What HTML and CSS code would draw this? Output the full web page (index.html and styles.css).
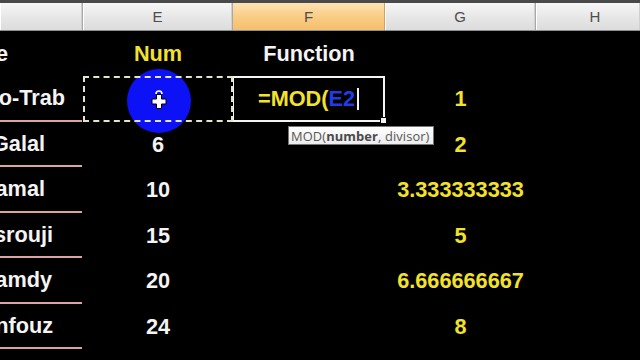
FILE: index.html
```html
<!DOCTYPE html>
<html>
<head>
<meta charset="utf-8">
<link rel="stylesheet" href="styles.css">
</head>
<body>
<div class="app">
  <div class="topbar"></div>
  <div class="colheads">
    <div class="ch ch-d"></div>
    <div class="ch ch-e">E</div>
    <div class="ch ch-f">F</div>
    <div class="ch ch-g">G</div>
    <div class="ch ch-h">H</div>
  </div>
  <div class="sheet">
    <div class="cell name n-head">e</div>
    <div class="cell yellow">Num</div>
    <div class="cell white">Function</div>
    <div class="cell"></div>
    <div class="cell"></div>

    <div class="cell name line n-2">o-Trab</div>
    <div class="cell white selected">
      <span class="val">2</span>
      <span class="spot"></span>
      <svg class="cursor" width="20" height="24" viewBox="0 0 20 24">
        <path d="M7 9 A3 3 0 0 1 13 9" fill="none" stroke="#fff" stroke-width="1.6"/>
        <path d="M7.5 9.5h5v4.5h4.5v5h-4.5v4.5h-5v-4.5h-4.5v-5h4.5z" fill="#fff" stroke="#000" stroke-width="1"/>
      </svg>
      <span class="ants"></span>
    </div>
    <div class="cell editing">
      <span class="yellow">=MOD(</span><span class="ref">E2</span><span class="caret"></span>
      <span class="handle"></span>
      <div class="tip">MOD(<b>number</b>, divisor)</div>
    </div>
    <div class="cell yellow">1</div>
    <div class="cell"></div>

    <div class="cell name line n-3">Galal</div>
    <div class="cell white">6</div>
    <div class="cell"></div>
    <div class="cell yellow">2</div>
    <div class="cell"></div>

    <div class="cell name line n-4">amal</div>
    <div class="cell white">10</div>
    <div class="cell"></div>
    <div class="cell yellow">3.333333333</div>
    <div class="cell"></div>

    <div class="cell name line n-5">srouji</div>
    <div class="cell white">15</div>
    <div class="cell"></div>
    <div class="cell yellow">5</div>
    <div class="cell"></div>

    <div class="cell name line n-6">amdy</div>
    <div class="cell white">20</div>
    <div class="cell"></div>
    <div class="cell yellow">6.666666667</div>
    <div class="cell"></div>

    <div class="cell name line n-7">nfouz</div>
    <div class="cell white">24</div>
    <div class="cell"></div>
    <div class="cell yellow">8</div>
    <div class="cell"></div>
  </div>
</div>
</body>
</html>
```
FILE: styles.css
```css
html, body {
  margin: 0;
  padding: 0;
  background: #000;
}
.app {
  width: 640px;
  height: 360px;
  overflow: hidden;
  background: #000;
  font-family: "Liberation Sans", Arial, sans-serif;
}
.topbar {
  height: 3px;
  background: #4a4a4a;
}
.colheads {
  height: 27px;
  display: grid;
  grid-template-columns: 83px 150px 152px 151px 1fr;
  border-bottom: 1px solid #8f8f8f;
  background: linear-gradient(#f7f7f7, #e6e6e6 55%, #dcdcdc);
}
.ch {
  display: flex;
  align-items: center;
  justify-content: center;
  font-size: 15px;
  color: #4d4d4d;
  border-right: 1px solid #a8a8a8;
  box-shadow: inset -1px 0 0 #d0d0d0, inset 1px 0 0 #fff;
}
.ch-f {
  background: linear-gradient(#fde3b4, #f9cd86 50%, #f5bf6c);
  box-shadow: none;
  border-right-color: #c9a26a;
}
.ch-h {
  border-right: none;
  padding-left: 14px;
}
.sheet {
  display: grid;
  grid-template-columns: 83px 150px 152px 151px 1fr;
  grid-template-rows: 45px;
  grid-auto-rows: 45.5px;
}
.cell {
  position: relative;
  display: flex;
  align-items: center;
  justify-content: center;
  font-size: 21.7px;
  font-weight: bold;
  box-sizing: border-box;
  white-space: nowrap;
  padding-top: 1px;
}
.white { color: #f4f4f4; }
.yellow { color: #f3e22c; }
.name {
  color: #f4f4f4;
  justify-content: flex-end;
}
.line {
  border-bottom: 2px solid #dba4a4;
  margin-right: 1px;
}
.n-head { padding-right: 75px; }
.n-2 { padding-right: 17px; }
.n-3 { padding-right: 37px; }
.n-4 { padding-right: 37px; }
.n-5 { padding-right: 29px; }
.n-6 { padding-right: 30px; }
.n-7 { padding-right: 29px; }

.selected .val {
  position: relative;
  z-index: 0;
}
.spot {
  position: absolute;
  left: 44px;
  top: -7px;
  width: 64px;
  height: 64px;
  border-radius: 50%;
  background: #0c12f5;
  z-index: 1;
}
.cursor {
  position: absolute;
  left: 66px;
  top: 9px;
  z-index: 2;
}
.ants {
  position: absolute;
  inset: 0 0 0 0;
  border: 2px dashed #e6e6c4;
  z-index: 3;
}
.editing {
  border: 2px solid #f4f4f4;
  border-left-width: 1px;
}
.ref { color: #1f3ce6; }
.caret {
  display: inline-block;
  width: 2px;
  height: 22px;
  margin-left: 2px;
  background: #f4f4f4;
}
.handle {
  position: absolute;
  right: -4px;
  bottom: -4px;
  width: 5px;
  height: 5px;
  background: #f4f4f4;
  border: 1px solid #000;
}
.tip {
  position: absolute;
  left: 54px;
  top: 48px;
  height: 17px;
  padding: 0 3px 0 2px;
  display: flex;
  align-items: center;
  background: linear-gradient(#ffffff, #ececec);
  border: 1px solid #767676;
  color: #575757;
  font-family: "Open Sans", "Liberation Sans", sans-serif;
  font-size: 12.9px;
  font-weight: normal;
  letter-spacing: 0.1px;
}
.tip b {
  font-weight: bold;
  color: #4a4a4a;
}
```
